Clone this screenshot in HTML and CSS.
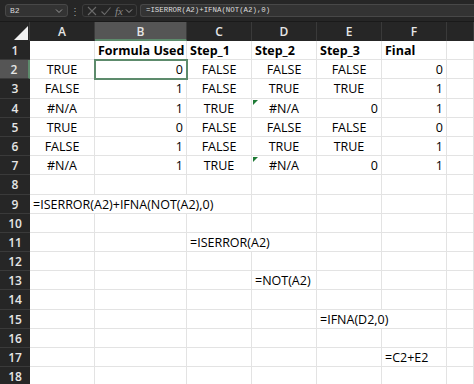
FILE: index.html
```html
<!DOCTYPE html>
<html lang="en">
<head>
  <meta charset="UTF-8">
  <meta name="viewport" content="width=device-width, initial-scale=1.0">
  <title>Formula Used</title>
  <link rel="stylesheet" href="styles.css">
</head>
<body>

  <!-- Formula bar -->
  <div class="toolbar">
    <div class="name-box">
      <span>B2</span>
      <svg width="8" height="6" viewBox="0 0 8 6"><path d="M1 1.5 L4 4.5 L7 1.5" fill="none" stroke="#9a9a9a" stroke-width="1"/></svg>
    </div>
    <div class="dots">⋮</div>
    <div class="fx-tools">
      <svg width="12" height="12" viewBox="0 0 12 12"><path d="M2 2 L10 10 M10 2 L2 10" stroke="#6a6a6a" stroke-width="1.1"/></svg>
      <svg width="12" height="12" viewBox="0 0 12 12"><path d="M1.5 6.5 L4.5 9.5 L10.5 2.5" fill="none" stroke="#6a6a6a" stroke-width="1.1"/></svg>
      <span class="fx">fx</span>
      <svg width="8" height="6" viewBox="0 0 8 6"><path d="M1 1.5 L4 4.5 L7 1.5" fill="none" stroke="#9a9a9a" stroke-width="1"/></svg>
    </div>
    <div class="formula">=ISERROR(A2)+IFNA(NOT(A2),0)</div>
  </div>

  <!-- Sheet -->
  <div class="sheet">
    <div class="corner"><div class="tri"></div></div>
    <div class="col-head">A</div>
    <div class="col-head active">B</div>
    <div class="col-head">C</div>
    <div class="col-head">D</div>
    <div class="col-head">E</div>
    <div class="col-head">F</div>
    <div class="col-head"></div>

    <div class="row-head">1</div>
    <div class="cell"></div>
    <div class="cell bold">Formula Used</div>
    <div class="cell bold">Step_1</div>
    <div class="cell bold">Step_2</div>
    <div class="cell bold">Step_3</div>
    <div class="cell bold">Final</div>
    <div class="cell"></div>

    <div class="row-head active">2</div>
    <div class="cell center">TRUE</div>
    <div class="cell num selected">0</div>
    <div class="cell center">FALSE</div>
    <div class="cell center">FALSE</div>
    <div class="cell center">FALSE</div>
    <div class="cell num">0</div>
    <div class="cell"></div>

    <div class="row-head">3</div>
    <div class="cell center">FALSE</div>
    <div class="cell num">1</div>
    <div class="cell center">FALSE</div>
    <div class="cell center">TRUE</div>
    <div class="cell center">TRUE</div>
    <div class="cell num">1</div>
    <div class="cell"></div>

    <div class="row-head">4</div>
    <div class="cell center">#N/A</div>
    <div class="cell num">1</div>
    <div class="cell center">TRUE</div>
    <div class="cell center flag">#N/A</div>
    <div class="cell num">0</div>
    <div class="cell num">1</div>
    <div class="cell"></div>

    <div class="row-head">5</div>
    <div class="cell center">TRUE</div>
    <div class="cell num">0</div>
    <div class="cell center">FALSE</div>
    <div class="cell center">FALSE</div>
    <div class="cell center">FALSE</div>
    <div class="cell num">0</div>
    <div class="cell"></div>

    <div class="row-head">6</div>
    <div class="cell center">FALSE</div>
    <div class="cell num">1</div>
    <div class="cell center">FALSE</div>
    <div class="cell center">TRUE</div>
    <div class="cell center">TRUE</div>
    <div class="cell num">1</div>
    <div class="cell"></div>

    <div class="row-head">7</div>
    <div class="cell center">#N/A</div>
    <div class="cell num">1</div>
    <div class="cell center">TRUE</div>
    <div class="cell center flag">#N/A</div>
    <div class="cell num">0</div>
    <div class="cell num">1</div>
    <div class="cell"></div>

    <div class="row-head">8</div>
    <div class="cell"></div><div class="cell"></div><div class="cell"></div><div class="cell"></div><div class="cell"></div><div class="cell"></div><div class="cell"></div>

    <div class="row-head">9</div>
    <div class="cell"><span class="spill">=ISERROR(A2)+IFNA(NOT(A2),0)</span></div>
    <div class="cell"></div><div class="cell"></div><div class="cell"></div><div class="cell"></div><div class="cell"></div><div class="cell"></div>

    <div class="row-head">10</div>
    <div class="cell"></div><div class="cell"></div><div class="cell"></div><div class="cell"></div><div class="cell"></div><div class="cell"></div><div class="cell"></div>

    <div class="row-head">11</div>
    <div class="cell"></div><div class="cell"></div>
    <div class="cell"><span class="spill">=ISERROR(A2)</span></div>
    <div class="cell"></div><div class="cell"></div><div class="cell"></div><div class="cell"></div>

    <div class="row-head">12</div>
    <div class="cell"></div><div class="cell"></div><div class="cell"></div><div class="cell"></div><div class="cell"></div><div class="cell"></div><div class="cell"></div>

    <div class="row-head">13</div>
    <div class="cell"></div><div class="cell"></div><div class="cell"></div>
    <div class="cell"><span class="spill">=NOT(A2)</span></div>
    <div class="cell"></div><div class="cell"></div><div class="cell"></div>

    <div class="row-head">14</div>
    <div class="cell"></div><div class="cell"></div><div class="cell"></div><div class="cell"></div><div class="cell"></div><div class="cell"></div><div class="cell"></div>

    <div class="row-head">15</div>
    <div class="cell"></div><div class="cell"></div><div class="cell"></div><div class="cell"></div>
    <div class="cell"><span class="spill">=IFNA(D2,0)</span></div>
    <div class="cell"></div><div class="cell"></div>

    <div class="row-head">16</div>
    <div class="cell"></div><div class="cell"></div><div class="cell"></div><div class="cell"></div><div class="cell"></div><div class="cell"></div><div class="cell"></div>

    <div class="row-head">17</div>
    <div class="cell"></div><div class="cell"></div><div class="cell"></div><div class="cell"></div><div class="cell"></div>
    <div class="cell"><span class="spill">=C2+E2</span></div>
    <div class="cell"></div>

    <div class="row-head">18</div>
    <div class="cell"></div><div class="cell"></div><div class="cell"></div><div class="cell"></div><div class="cell"></div><div class="cell"></div><div class="cell"></div>
  </div>

</body>
</html>
```
FILE: styles.css
```css
/* General Reset */
* {
  margin: 0;
  padding: 0;
  box-sizing: border-box;
}
body {
  width: 474px;
  height: 384px;
  overflow: hidden;
  background: #ffffff;
  font-family: "Open Sans", sans-serif;
  color: #000;
}

/* Formula bar */
.toolbar {
  height: 22px;
  background: #262626;
  border-bottom: 1px solid #1a1a1a;
  display: flex;
  align-items: center;
  padding-left: 5px;
}
.name-box {
  width: 63px;
  height: 13px;
  background: #333333;
  border: 1px solid #484848;
  border-radius: 3px;
  display: flex;
  align-items: center;
  justify-content: space-between;
  padding: 0 4px 0 4px;
  font-family: "Liberation Mono", monospace;
  font-size: 8px;
  color: #d8d8d8;
}
.dots {
  width: 14px;
  text-align: center;
  color: #9a9a9a;
  font-size: 10px;
}
.fx-tools {
  width: 55px;
  height: 13px;
  border: 1px solid #3c3c3c;
  border-radius: 3px;
  display: flex;
  align-items: center;
  gap: 2px;
  padding: 0 3px;
}
.fx {
  font-family: "Liberation Serif", serif;
  font-style: italic;
  font-size: 11px;
  color: #8a8a8a;
  margin-left: 1px;
}
.formula {
  flex: 1;
  height: 13px;
  margin-left: 3px;
  background: #333333;
  border: 1px solid #484848;
  border-right: none;
  border-radius: 3px 0 0 3px;
  padding-left: 5px;
  font-family: "Liberation Mono", monospace;
  font-size: 7.4px;
  line-height: 11px;
  color: #dcdcdc;
}

/* Sheet grid */
.sheet {
  display: grid;
  grid-template-columns: 30px 65px 92px 65px 65px 65px 65px 27px;
  grid-template-rows: 19px repeat(18, 19.2px);
}
.corner {
  background: #262626;
  border-right: 1px solid #3a3a3a;
  position: relative;
}
.tri {
  position: absolute;
  right: 1px;
  bottom: 1px;
  width: 0;
  height: 0;
  border-left: 14px solid transparent;
  border-bottom: 14px solid #f2f2f2;
}
.col-head {
  background: #262626;
  color: #e6e6e6;
  border-right: 1px solid #3a3a3a;
  font-size: 12px;
  font-weight: 600;
  text-align: center;
  line-height: 19px;
}
.col-head.active {
  background: #555555;
  border-bottom: 2px solid #5d8b6c;
}
.row-head {
  background: #262626;
  color: #e6e6e6;
  border-bottom: 1px solid #3a3a3a;
  font-size: 12px;
  font-weight: 600;
  text-align: center;
  line-height: 19px;
}
.row-head.active {
  background: #555555;
  border-right: 2px solid #5d8b6c;
}
.cell {
  border-right: 1px solid #e3e3e3;
  border-bottom: 1px solid #e3e3e3;
  font-size: 12.5px;
  line-height: 19px;
  padding: 0 3px;
  white-space: nowrap;
  overflow: visible;
}
.spill {
  display: inline-block;
  height: 18px;
  line-height: 19px;
  background: #ffffff;
  padding-right: 2px;
  position: relative;
  z-index: 1;
}
.center {
  text-align: center;
}
.num {
  text-align: right;
}
.bold {
  font-weight: 700;
}
.selected {
  outline: 2px solid #5d8b6c;
  outline-offset: -1px;
  position: relative;
  z-index: 1;
}
.flag {
  position: relative;
}
.flag::before {
  content: "";
  position: absolute;
  left: 1px;
  top: 1px;
  border-top: 5px solid #1e7a35;
  border-right: 5px solid transparent;
}
```
